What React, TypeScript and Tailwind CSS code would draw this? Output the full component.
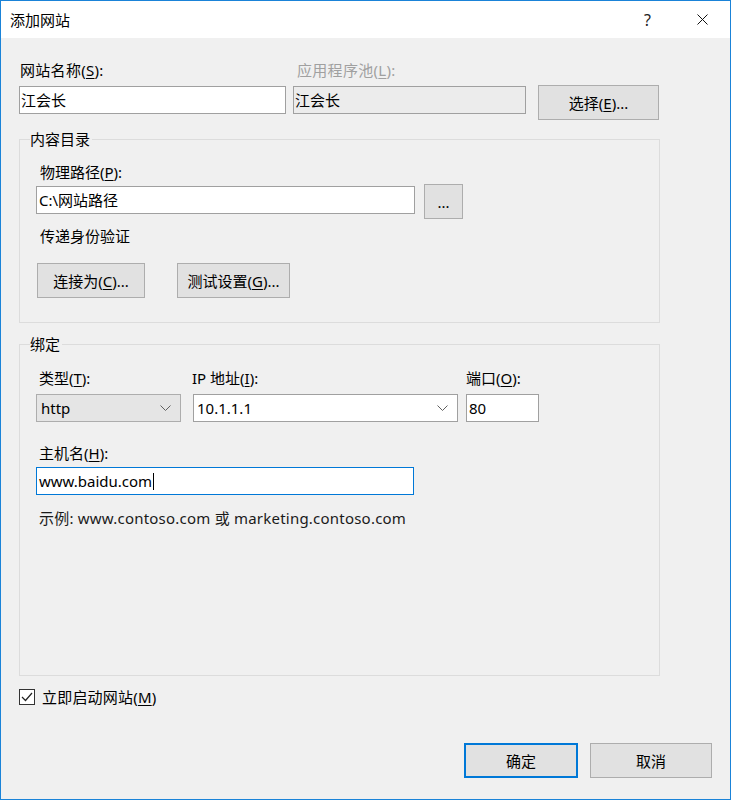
import React from 'react';

const font = { fontFamily: '"Noto Sans", "Noto Sans CJK SC", sans-serif' };

const Key = ({ k }: { k: string }) => <span className="underline underline-offset-2">{k}</span>;

const Btn = ({ children, className = '' }: { children: React.ReactNode; className?: string }) => (
  <div
    className={`flex h-[35px] items-center justify-center border border-[#adadad] bg-[#e1e1e1] text-[15px] leading-5 text-black ${className}`}
  >
    {children}
  </div>
);

const Chevron = () => (
  <svg width="11" height="7" viewBox="0 0 11 7" className="shrink-0">
    <polyline points="0.5,0.5 5.5,5.5 10.5,0.5" fill="none" stroke="#606060" strokeWidth="1" />
  </svg>
);

const Group = ({ title, className = '', children }: { title: string; className?: string; children: React.ReactNode }) => (
  <div className={`relative mx-[18px] box-border w-[641px] border border-[#dcdcdc] ${className}`}>
    <span className="absolute left-[10px] top-[-11px] bg-[#f0f0f0] pr-[2px] text-[15px] leading-5">{title}</span>
    {children}
  </div>
);

export default function App() {
  return (
    <div
      className="box-border flex h-[800px] w-[731px] flex-col border border-[#1a83d8] bg-[#f0f0f0] text-[15px] leading-5 text-black"
      style={font}
    >
      {/* title bar */}
      <div className="flex h-[37px] shrink-0 items-center bg-white pl-[9px]">
        <span className="flex-1">添加网站</span>
        <span className="mr-[46px] text-[16px] text-[#222]">?</span>
        <svg width="11" height="11" viewBox="0 0 11 11" className="mr-[22px]">
          <path d="M0.5 0.5 L10.5 10.5 M10.5 0.5 L0.5 10.5" stroke="#111" strokeWidth="1" />
        </svg>
      </div>

      {/* site name / app pool */}
      <div className="mt-[22px] flex items-start pl-[18px]">
        <div className="flex w-[267px] flex-col">
          <span className="pl-[1px] tracking-[0.3px]">
            网站名称(<Key k="S" />):
          </span>
          <div className="mt-[6px] flex h-[28px] items-center border border-[#a0a0a0] bg-white pl-[1px]">江会长</div>
        </div>
        <div className="ml-[7px] flex w-[233px] flex-col">
          <span className="pl-[4px] tracking-[0.3px] text-[#a0a0a0]">
            应用程序池(<Key k="L" />):
          </span>
          <div className="mt-[6px] flex h-[28px] items-center border border-[#a0a0a0] bg-[#ececec] pl-[1px]">江会长</div>
        </div>
        <Btn className="ml-[12px] mt-[25px] w-[121px]">
          选择(<Key k="E" />)...
        </Btn>
      </div>

      {/* content directory */}
      <Group title="内容目录" className="mt-[19px] h-[184px]">
        <div className="flex flex-col pl-[16px] pt-[22px]">
          <span className="pl-[4px]">
            物理路径(<Key k="P" />):
          </span>
          <div className="mt-[4px] flex items-start">
            <div className="flex h-[28px] w-[379px] items-center border border-[#a0a0a0] bg-white pl-[2px]">C:\网站路径</div>
            <Btn className="-mt-[2px] ml-[9px] w-[39px]">...</Btn>
          </div>
          <span className="mt-[7px] pl-[4px]">传递身份验证</span>
          <div className="mt-[17px] flex pl-[1px]">
            <Btn className="w-[108px]">
              连接为(<Key k="C" />)...
            </Btn>
            <Btn className="ml-[32px] w-[113px]">
              测试设置(<Key k="G" />)...
            </Btn>
          </div>
        </div>
      </Group>

      {/* binding */}
      <Group title="绑定" className="mt-[21px] h-[332px]">
        <div className="flex flex-col pl-[16px] pt-[23px]">
          <div className="flex">
            <div className="flex w-[145px] flex-col">
              <span className="pl-[3px]">
                类型(<Key k="T" />):
              </span>
              <div className="mt-[6px] flex h-[28px] items-center justify-between border border-[#adadad] bg-[#e5e5e5] pl-[4px] pr-[9px]">
                <span>http</span>
                <Chevron />
              </div>
            </div>
            <div className="ml-[12px] flex w-[265px] flex-col">
              <span className="-ml-[1px]">
                IP 地址(<Key k="I" />):
              </span>
              <div className="mt-[6px] flex h-[28px] items-center justify-between border border-[#a0a0a0] bg-white pl-[3px] pr-[9px]">
                <span>10.1.1.1</span>
                <Chevron />
              </div>
            </div>
            <div className="ml-[8px] flex w-[73px] flex-col">
              <span>
                端口(<Key k="O" />):
              </span>
              <div className="mt-[6px] flex h-[28px] items-center border border-[#a0a0a0] bg-white pl-[2px]">80</div>
            </div>
          </div>
          <span className="mt-[21px] pl-[3px]">
            主机名(<Key k="H" />):
          </span>
          <div className="mt-[4px] flex h-[28px] w-[378px] items-center border border-[#0078d7] bg-white pl-[2px]">
            <span>www.baidu.com</span>
            <span className="ml-[1px] h-[17px] w-px bg-black" />
          </div>
          <span className="mt-[13px] pl-[3px] tracking-[0.22px] text-[#1a1a1a]">
            示例: www.contoso.com 或 marketing.contoso.com
          </span>
        </div>
      </Group>

      {/* start now */}
      <div className="mt-[11px] flex items-center pl-[18px]">
        <div className="box-border flex h-[16px] w-[16px] items-center justify-center border border-[#333] bg-white">
          <svg width="14" height="14" viewBox="0 0 14 14">
            <polyline points="2,7 5.5,10.5 12,3" fill="none" stroke="#222" strokeWidth="1.2" />
          </svg>
        </div>
        <span className="ml-[7px] tracking-[0.2px]">
          立即启动网站(<Key k="M" />)
        </span>
      </div>

      {/* footer buttons */}
      <div className="mt-[36px] flex justify-end pr-[18px]">
        <div className="box-border flex h-[35px] w-[114px] items-center justify-center border-2 border-[#0078d7] bg-[#e1e1e1]">
          确定
        </div>
        <Btn className="ml-[12px] w-[122px]">取消</Btn>
      </div>
    </div>
  );
}
